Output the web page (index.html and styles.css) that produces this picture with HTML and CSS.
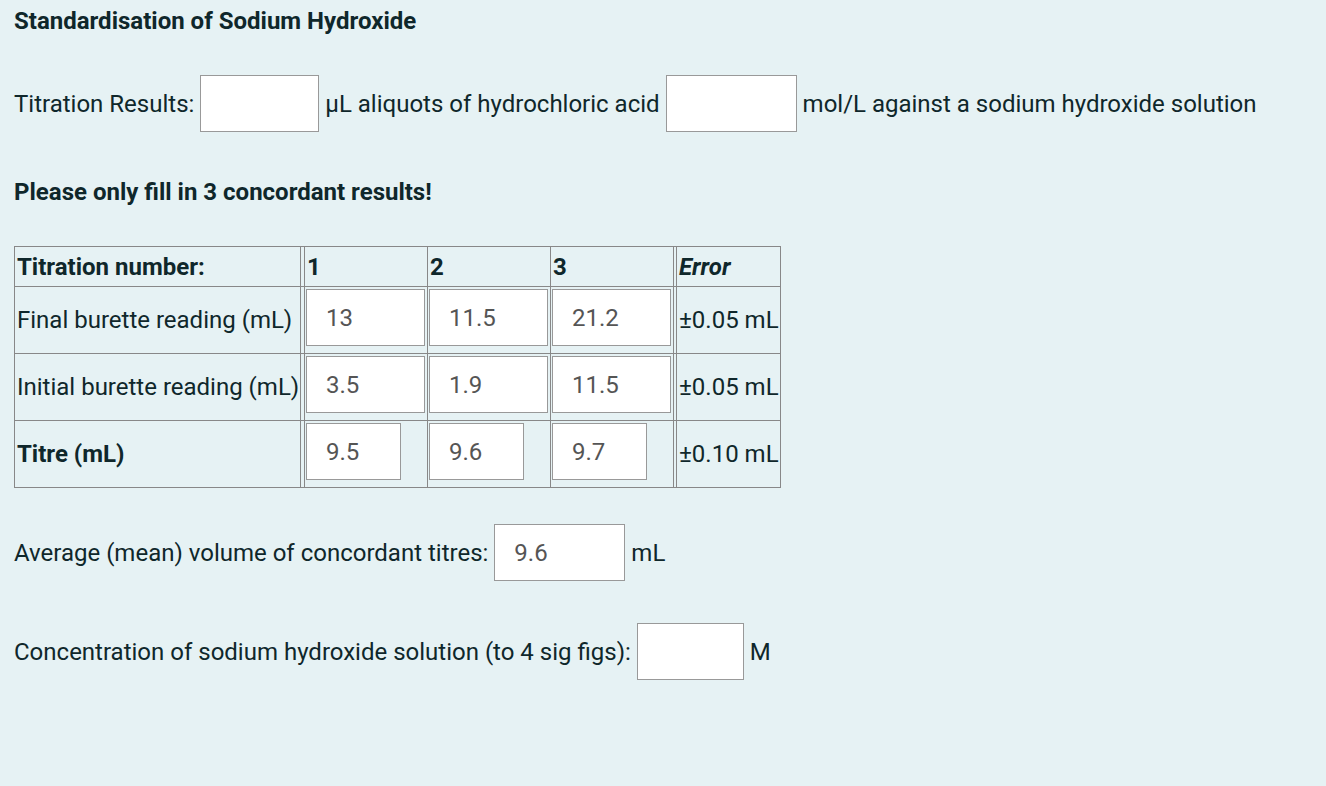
FILE: index.html
```html
<!DOCTYPE html>
<html lang="en">
<head>
<meta charset="utf-8">
<title>Standardisation of Sodium Hydroxide</title>
<link rel="stylesheet" href="styles.css">
</head>
<body>
<main class="page">
  <h1 class="title">Standardisation of Sodium Hydroxide</h1>

  <div class="line line-results">
    <span>Titration Results:</span>
    <input class="field w119" type="text">
    <span>µL aliquots of hydrochloric acid</span>
    <input class="field w131" type="text">
    <span>mol/L against a sodium hydroxide solution</span>
  </div>

  <p class="notice">Please only fill in 3 concordant results!</p>

  <table class="titration">
    <colgroup>
      <col class="c-label">
      <col class="c-sep1">
      <col class="c-num">
      <col class="c-num">
      <col class="c-num">
      <col class="c-sep2">
      <col class="c-err">
    </colgroup>
    <tr class="head">
      <th class="label">Titration number:</th>
      <th class="sep"></th>
      <th class="num">1</th>
      <th class="num">2</th>
      <th class="num">3</th>
      <th class="sep"></th>
      <th class="err"><em>Error</em></th>
    </tr>
    <tr>
      <td class="label">Final burette reading (mL)</td>
      <td class="sep"></td>
      <td class="cell"><input class="field w119" type="text" value="13"></td>
      <td class="cell"><input class="field w119" type="text" value="11.5"></td>
      <td class="cell"><input class="field w119" type="text" value="21.2"></td>
      <td class="sep"></td>
      <td class="err">±0.05 mL</td>
    </tr>
    <tr>
      <td class="label">Initial burette reading (mL)</td>
      <td class="sep"></td>
      <td class="cell"><input class="field w119" type="text" value="3.5"></td>
      <td class="cell"><input class="field w119" type="text" value="1.9"></td>
      <td class="cell"><input class="field w119" type="text" value="11.5"></td>
      <td class="sep"></td>
      <td class="err">±0.05 mL</td>
    </tr>
    <tr>
      <td class="label"><strong>Titre (mL)</strong></td>
      <td class="sep"></td>
      <td class="cell"><input class="field w95" type="text" value="9.5"></td>
      <td class="cell"><input class="field w95" type="text" value="9.6"></td>
      <td class="cell"><input class="field w95" type="text" value="9.7"></td>
      <td class="sep"></td>
      <td class="err">±0.10 mL</td>
    </tr>
  </table>

  <div class="line line-avg">
    <span>Average (mean) volume of concordant titres:</span>
    <input class="field w131" type="text" value="9.6">
    <span>mL</span>
  </div>

  <div class="line line-conc">
    <span>Concentration of sodium hydroxide solution (to 4 sig figs):</span>
    <input class="field w107" type="text">
    <span>M</span>
  </div>
</main>
</body>
</html>
```
FILE: styles.css
```css
* { box-sizing: border-box; }

html, body {
  margin: 0;
  padding: 0;
  background: #e6f2f4;
}

body {
  font-family: Roboto, "Noto Sans", sans-serif;
  font-size: 24px;
  color: #0f272b;
  min-height: 786px;
}

.page {
  padding: 7px 14px 0 14px;
  display: flex;
  flex-direction: column;
  align-items: flex-start;
}

.title {
  margin: 0;
  font-size: 24px;
  font-weight: 700;
  line-height: 28px;
}

.line {
  display: flex;
  align-items: center;
  gap: 6px;
  line-height: 28px;
  white-space: nowrap;
}

.line-results { margin-top: 40px; }
.line-avg { margin-top: 36px; }
.line-conc { margin-top: 42px; }

.notice {
  margin: 46px 0 0 0;
  font-weight: 700;
  line-height: 28px;
}

.field {
  height: 57px;
  border: 1px solid #999;
  background: #fff;
  font-family: Roboto, "Noto Sans", sans-serif;
  font-size: 24px;
  color: #555;
  padding: 0 0 0 19px;
  margin: 0;
  outline: none;
  border-radius: 0;
}

.w95 { width: 95px; }
.w107 { width: 107px; }
.w119 { width: 119px; }
.w131 { width: 131px; }

.titration {
  margin-top: 40px;
  border-collapse: separate;
  border-spacing: 0;
  border-top: 1px solid #888;
  border-left: 1px solid #888;
  table-layout: fixed;
  width: 767px;
}

.c-label { width: 286px; }
.c-sep1 { width: 4px; }
.c-num { width: 123px; }
.c-sep2 { width: 3px; }
.c-err { width: 104px; }

.titration th,
.titration td {
  border-right: 1px solid #888;
  border-bottom: 1px solid #888;
  padding: 0 2px;
  height: 67px;
  vertical-align: middle;
  text-align: left;
  font-weight: 400;
  white-space: nowrap;
  line-height: 28px;
}

.titration .head th {
  height: 40px;
  font-weight: 700;
}

.titration .head th.err em {
  font-style: italic;
  font-weight: 700;
}

.titration .label {
  padding-left: 2px;
  padding-right: 0;
}

.titration .sep {
  padding: 0;
}

.titration td.cell {
  vertical-align: top;
  padding: 2px 0 0 1px;
}

.titration td.cell .field {
  display: block;
}

.titration td.err {
  padding-left: 2px;
  padding-right: 0;
}
```
